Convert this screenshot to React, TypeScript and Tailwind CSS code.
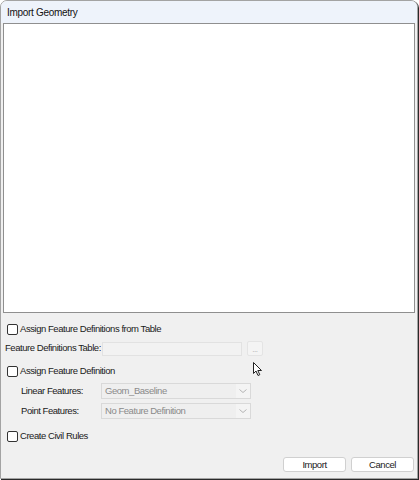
import React from 'react'

function Check({ label }: { label: string }) {
  return (
    <div className="flex items-center h-[14px]">
      <span className="w-[11px] h-[11px] rounded-[2px] border border-[#333] bg-white ml-[6px] mr-[2px]" />
      <span>{label}</span>
    </div>
  )
}

function Combo({ value }: { value: string }) {
  return (
    <div className="w-[150px] h-[16px] border border-[#d9d9d9] bg-[#f4f4f4] flex items-center">
      <span className="flex-1 h-full bg-[#efefef] pl-[3px] text-[#8a8a8a] leading-[14px]">{value}</span>
      <svg width="14" height="14" viewBox="0 0 14 14" className="shrink-0">
        <path d="M3.5 5.5 L7 8.5 L10.5 5.5" fill="none" stroke="#b5b5b5" strokeWidth="1" />
      </svg>
    </div>
  )
}

export default function App() {
  return (
    <div className="w-[419px] h-[480px] bg-white relative" style={{ fontFamily: '"Liberation Sans", Arial, sans-serif' }}>
      <div className="w-[418px] h-[479px] rounded-t-[7px] border border-[#a3a3a3] bg-[#f0f0f0] shadow-[1px_1px_0_#2a2a2a] flex flex-col overflow-hidden text-[9.5px] text-[#1a1a1a] tracking-[-0.45px] whitespace-nowrap">
        {/* Title bar */}
        <div className="h-[22px] bg-[#eef3fb] flex items-center pl-[6px] text-[10px] tracking-[-0.3px] text-[#111]">
          Import Geometry
        </div>

        {/* List */}
        <div className="mx-[2px] h-[290px] bg-white border border-[#8f8f8f]" />

        <div className="mt-[9px] flex flex-col">
          <Check label="Assign Feature Definitions from Table" />

          <div className="mt-[5px] flex items-center h-[15px] pl-[4px]">
            <span className="w-[97px]">Feature Definitions Table:</span>
            <div className="w-[140px] h-[14px] border border-[#e2e2e2] bg-[#f2f2f2]" />
            <div className="ml-[5px] w-[16px] h-[15px] border border-[#e4e4e4] bg-[#f4f4f4] rounded-[2px] flex items-end justify-center text-[8px] text-[#aaa] leading-[10px]">...</div>
          </div>

          <div className="mt-[8px]">
            <Check label="Assign Feature Definition" />
          </div>

          <div className="mt-[5px] flex items-center pl-[20px]">
            <span className="w-[80px]">Linear Features:</span>
            <Combo value="Geom_Baseline" />
          </div>
          <div className="mt-[4px] flex items-center pl-[20px]">
            <span className="w-[80px]">Point Features:</span>
            <Combo value="No Feature Definition" />
          </div>

          <div className="mt-[10px]">
            <Check label="Create Civil Rules" />
          </div>

          <div className="mt-[14px] flex justify-end gap-[5px] pr-[3px]">
            <button className="w-[63px] h-[15px] bg-white border border-[#d0d0d0] rounded-[3px] leading-[13px]">Import</button>
            <button className="w-[63px] h-[15px] bg-white border border-[#d0d0d0] rounded-[3px] leading-[13px]">Cancel</button>
          </div>
        </div>
      </div>

      {/* mouse cursor */}
      <svg className="absolute left-[253px] top-[362px]" width="10" height="15" viewBox="0 0 10 15">
        <path d="M0.5 0.5 L0.5 11.5 L3 9 L5 13.5 L6.8 12.7 L4.8 8.5 L8.5 8.5 Z" fill="white" stroke="#222" strokeWidth="1" strokeLinejoin="round" />
      </svg>
    </div>
  )
}
